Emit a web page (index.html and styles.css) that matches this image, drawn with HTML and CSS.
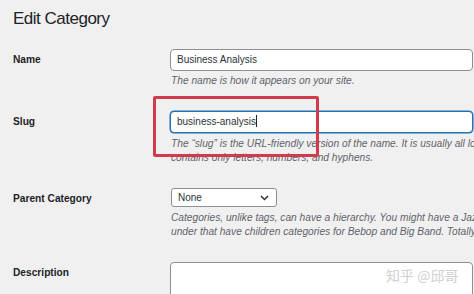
FILE: index.html
```html
<!DOCTYPE html>
<html lang="en">
<head>
  <meta charset="UTF-8">
  <meta name="viewport" content="width=device-width, initial-scale=1.0">
  <title>Edit Category</title>
  <link rel="stylesheet" href="styles.css">
</head>
<body>
  <div class="wrap">
    <h1>Edit Category</h1>

    <div class="form">
      <div class="label">Name</div>
      <div class="field">
        <div class="input">Business Analysis</div>
        <p class="help">The name is how it appears on your site.</p>
      </div>

      <div class="label">Slug</div>
      <div class="field">
        <div class="input focus">business-analysis<span class="caret"></span></div>
        <p class="help help-slug">The &ldquo;slug&rdquo; is the URL-friendly version of the name. It is usually all lowercase and<br>contains only letters, numbers, and hyphens.</p>
      </div>

      <div class="label">Parent Category</div>
      <div class="field">
        <div class="select">
          <span>None</span>
          <svg class="chevron" width="9" height="6" viewBox="0 0 9 6"><path d="M1 1l3.5 3.5L8 1" fill="none" stroke="#2c3338" stroke-width="1.5"/></svg>
        </div>
        <p class="help help-parent">Categories, unlike tags, can have a hierarchy. You might have a Jazz category, and<br>under that have children categories for Bebop and Big Band. Totally optional.</p>
      </div>

      <div class="label">Description</div>
      <div class="field">
        <div class="textarea"></div>
      </div>
    </div>
  </div>

  <!-- annotation over the slug field -->
  <div class="highlight"></div>
  <div class="watermark">知乎 @邱哥</div>
</body>
</html>
```

FILE: styles.css
```css
html, body {
  margin: 0;
  height: 100%;
  overflow: hidden;
}
body {
  font-family: "Liberation Sans", Arial, sans-serif;
  background-color: #f0f0f1;
  color: #1d2327;
  position: relative;
}
.wrap {
  padding: 9px 0 0 13px;
}
h1 {
  font-size: 17px;
  font-weight: normal;
  line-height: 20px;
  letter-spacing: -0.5px;
  margin: 0 0 20px;
}
.form {
  display: grid;
  grid-template-columns: 157px 303px;
  row-gap: 23px;
}
.label {
  font-size: 10.2px;
  font-weight: bold;
  line-height: 22px;
}
.input {
  box-sizing: border-box;
  height: 22px;
  line-height: 20px;
  padding: 0 6px;
  background: #fff;
  border: 1px solid #8c8f94;
  border-radius: 4px;
  font-size: 10px;
  color: #2c3338;
}
.input.focus {
  border-color: #2271b1;
  box-shadow: 0 0 0 0.5px #2271b1;
}
.caret {
  display: inline-block;
  width: 1px;
  height: 12px;
  background: #1d2327;
  vertical-align: -2px;
}
.help {
  margin: 3px 0 0 1px;
  font-size: 10.2px;
  line-height: 14px;
  font-style: italic;
  color: #5f646a;
  white-space: nowrap;
}
.help-slug {
  margin-top: 4px;
}
.help-parent {
  margin-top: 4px;
}
.select {
  box-sizing: border-box;
  width: 106px;
  height: 19px;
  margin-left: 1px;
  padding: 0 7px 0 6px;
  display: flex;
  align-items: center;
  justify-content: space-between;
  background: #fff;
  border: 1px solid #8c8f94;
  border-radius: 3px;
  font-size: 10px;
  color: #2c3338;
}
.textarea {
  box-sizing: border-box;
  height: 60px;
  background: #fff;
  border: 1px solid #8c8f94;
  border-radius: 4px;
}
.highlight {
  position: absolute;
  left: 153px;
  top: 96px;
  width: 160px;
  height: 55px;
  border: 3px solid #d23a4e;
  border-radius: 2px;
}
.watermark {
  position: absolute;
  left: 386px;
  top: 266px;
  font-family: "Noto Sans CJK SC", sans-serif;
  font-size: 14px;
  line-height: 18px;
  color: #d0d0d0;
}
```
